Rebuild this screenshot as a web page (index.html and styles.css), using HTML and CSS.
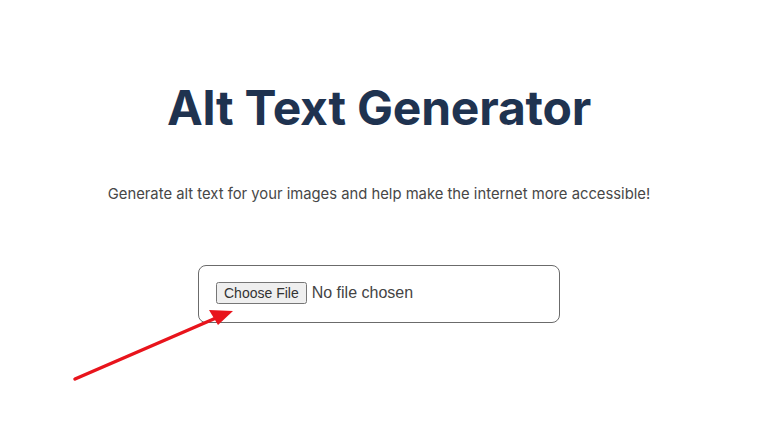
FILE: index.html
```html
<!DOCTYPE html>
<html lang="en">
<head>
    <meta charset="UTF-8" />
    <meta name="viewport" content="width=device-width, initial-scale=1.0" />
    <title>Alt Text Generator</title>
    <link rel="stylesheet" href="styles.css">
</head>
<body>
    <main class="page">
        <h1 class="title">Alt Text Generator</h1>
        <p class="subtitle">Generate alt text for your images and help make the internet more accessible!</p>
        <form class="upload-box">
            <input type="file" id="image" accept="image/*" />
        </form>
    </main>

    <!-- red annotation arrow pointing at the upload button -->
    <svg class="pointer" width="768" height="437" viewBox="0 0 768 437">
        <line x1="75" y1="379" x2="216" y2="318" stroke="#e8141c" stroke-width="3.5" stroke-linecap="round" />
        <polygon points="233,311 209,310 218,325" fill="#e8141c" />
    </svg>
</body>
</html>
```

FILE: styles.css
```css
body {
    margin: 0;
    background: #fff;
    font-family: Inter, "Noto Sans", sans-serif;
}

.page {
    display: flex;
    flex-direction: column;
    align-items: center;
    padding: 78px 10px 0 0;
}

.title {
    margin: 0;
    font-size: 48px;
    font-weight: 700;
    color: #1f3350;
    letter-spacing: -0.2px;
}

.subtitle {
    margin: 48px 0 0;
    font-size: 14.8px;
    color: #474747;
}

.upload-box {
    width: 362px;
    height: 58px;
    box-sizing: border-box;
    margin-top: 62px;
    padding: 16px 17px;
    border: 1px solid #6b6b6b;
    border-radius: 8px;
}

.upload-box input {
    font-family: "Liberation Sans", Arial, sans-serif;
    font-size: 16px;
    color: #444;
}

.upload-box input::file-selector-button {
    font-family: "Liberation Sans", Arial, sans-serif;
    font-size: 14px;
    color: #333;
    margin-right: 5px;
}

.pointer {
    position: absolute;
    top: 0;
    left: 0;
    pointer-events: none;
}
```
